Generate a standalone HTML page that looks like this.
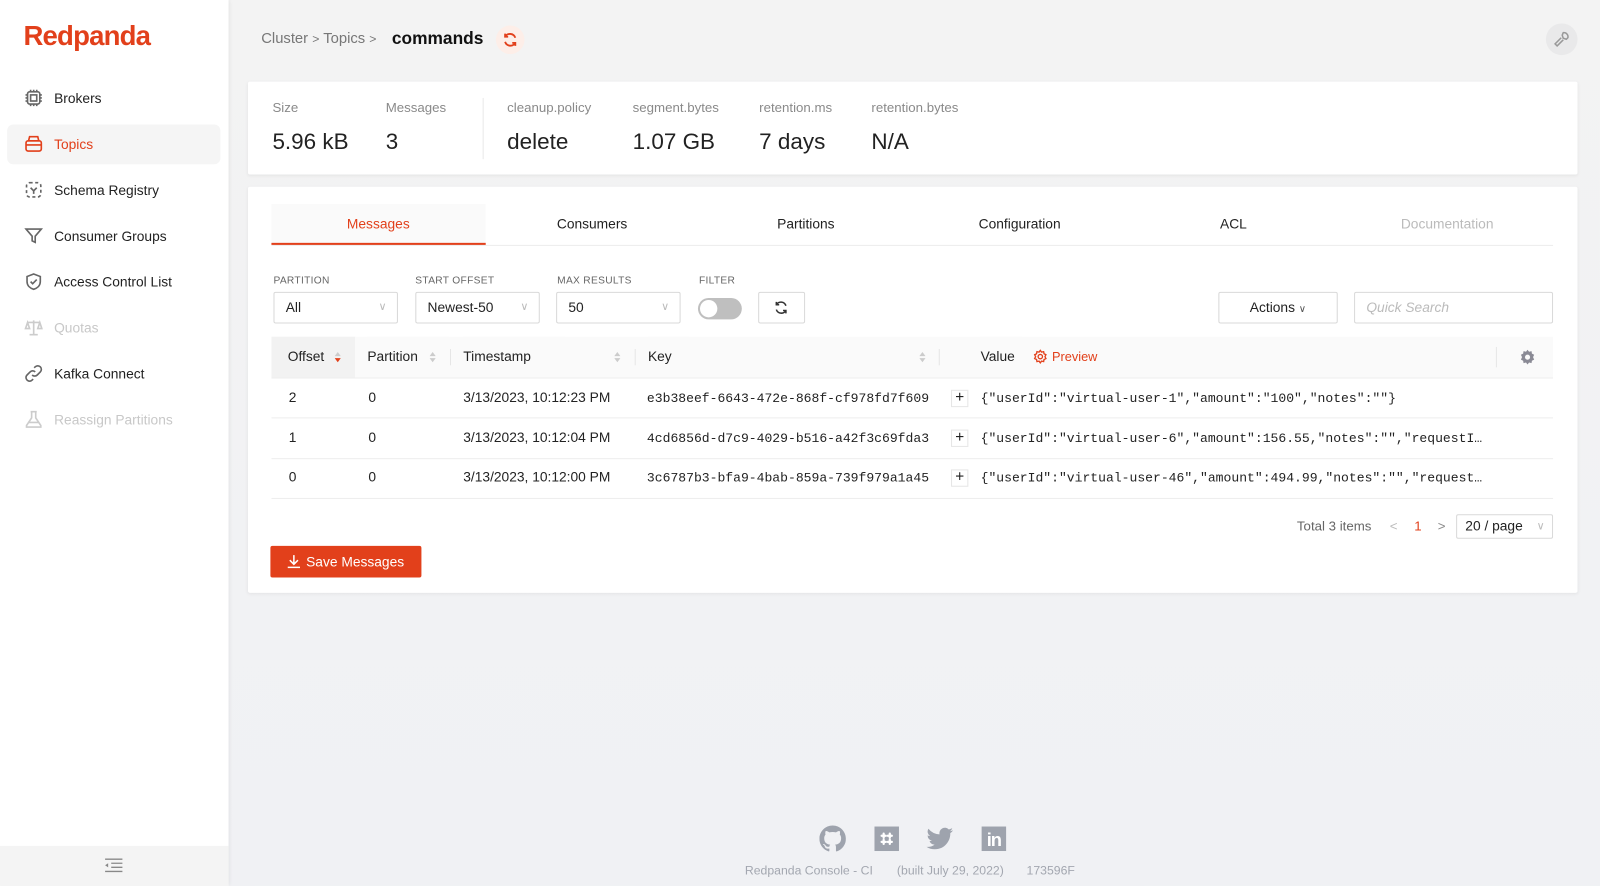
<!DOCTYPE html>
<html><head><meta charset="utf-8"><style>
*{box-sizing:border-box;margin:0;padding:0}
html,body{width:1600px;height:886px;overflow:hidden;background:#f2f2f3;font-family:"Liberation Sans",sans-serif;color:#222}
#w{position:absolute;left:0;top:0;width:1568px;height:868px;transform:scale(1.0204);transform-origin:0 0;background:linear-gradient(#f3f3f3,#f0f1f4)}
.a{position:absolute}
.sb{left:0;top:0;width:224px;height:868px;background:#fff;box-shadow:1px 0 4px rgba(0,0,0,.08)}
.logo{left:23px;top:20px;font-size:27px;font-weight:bold;color:#e2401b;letter-spacing:-0.8px}
.nav{left:24px;font-size:13.5px;color:#222;display:flex;align-items:center;gap:11px}
.nav svg{width:18px;height:18px;fill:none;stroke:#666;stroke-width:1.6}
.card{background:#fff;left:243px;width:1303px;box-shadow:0 1px 3px rgba(0,0,0,.06);border-radius:2px}
.lbl{font-size:13px;color:#8a8a8a}
.val{font-size:22px;color:#222}
.tab{top:200px;height:40px;width:209.5px;text-align:center;line-height:40px;font-size:13.5px;color:#222}
.fl{top:270px;font-size:10px;color:#666;letter-spacing:.3px}
.sel{top:286px;height:31px;border:1px solid #d9d9d9;background:#fff;font-size:13.5px;line-height:29px;padding-left:11px;border-radius:2px}
.sel .c{position:absolute;right:10px;top:0;color:#bbb;font-size:11px}
.th{top:330px;height:40px;line-height:40px;font-size:13.5px;color:#222;background:#fafafa}
.td{font-size:13.5px;color:#222}
.mono{font-family:"Liberation Mono",monospace;font-size:12.8px;letter-spacing:0}
.sort{position:absolute;top:14px;width:6px;height:12px}
.row{left:266px;width:1256px;height:1px;background:#eee}
</style></head><body><div id="w">
<div class="a sb"></div>
<div class="a logo">Redpanda</div>
<div class="a" style="left:7px;top:122px;width:209px;height:39px;background:#f5f5f5;border-radius:6px"></div>
<div class="a nav" style="top:87px"><svg viewBox="0 0 18 18"><rect x="3" y="3" width="12" height="12" rx="2"/><rect x="6" y="6" width="6" height="6"/><path d="M6 1v2M9 1v2M12 1v2M6 15v2M9 15v2M12 15v2M1 6h2M1 9h2M1 12h2M15 6h2M15 9h2M15 12h2"/></svg>Brokers</div>
<div class="a nav" style="top:132px;color:#e2401b"><svg viewBox="0 0 18 18" style="stroke:#e2401b"><path d="M5 2h8l1 4H4z"/><rect x="1.5" y="6" width="15" height="10" rx="2"/><path d="M1.5 10h15"/></svg>Topics</div>
<div class="a nav" style="top:177px"><svg viewBox="0 0 18 18" stroke-dasharray="3 2.5"><rect x="2" y="2" width="14" height="14" rx="3"/><path d="M6 7l3 3 3-3M9 10v3" stroke-dasharray="none"/></svg>Schema Registry</div>
<div class="a nav" style="top:222px"><svg viewBox="0 0 18 18"><path d="M1.5 2.5h15l-6 7v6l-3-1.5V9.5z"/></svg>Consumer Groups</div>
<div class="a nav" style="top:267px"><svg viewBox="0 0 18 18"><path d="M9 1.5l6.5 2.5v5c0 4-3 6.5-6.5 7.5C5.5 15.5 2.5 13 2.5 9V4z"/><path d="M6 9l2 2 4-4"/></svg>Access Control List</div>
<div class="a nav" style="top:312px;color:#c8c8c8"><svg viewBox="0 0 18 18" style="stroke:#ccc"><path d="M9 2v14M5 16h8M3 4h12M3 4l-2 6h4zM15 4l-2 6h4z"/></svg>Quotas</div>
<div class="a nav" style="top:357px"><svg viewBox="0 0 18 18"><path d="M7.5 10.5a3.5 3.5 0 005 0l3-3a3.5 3.5 0 00-5-5l-1 1M10.5 7.5a3.5 3.5 0 00-5 0l-3 3a3.5 3.5 0 005 5l1-1"/></svg>Kafka Connect</div>
<div class="a nav" style="top:402px;color:#c8c8c8"><svg viewBox="0 0 18 18" style="stroke:#ccc"><path d="M6 1.5h6M7 1.5v6l-5 7.5v1.5h14V15l-5-7.5v-6M4 12h10"/></svg>Reassign Partitions</div>
<div class="a" style="left:0;top:829px;width:224px;height:39px;background:#f4f4f4"></div>
<svg class="a" style="left:102px;top:840px" width="18" height="16" viewBox="0 0 18 16" stroke="#888" stroke-width="1.3"><path d="M1 2h17M7 6h11M7 10h11M1 14h17"/><path d="M1 8l3-2v4z" fill="#888" stroke="none"/></svg>

<div class="a" style="left:256px;top:30px;font-size:14.5px;color:#777">Cluster <span style="font-size:12px">&gt;</span> Topics <span style="font-size:12px">&gt;</span></div>
<div class="a" style="left:384px;top:28px;font-size:17px;font-weight:bold;color:#111">commands</div>
<div class="a" style="left:486px;top:25px;width:28px;height:28px;border-radius:50%;background:#fdeee8"></div>
<svg class="a" style="left:492px;top:31px" width="16" height="16" viewBox="0 0 16 16" fill="none" stroke="#e2401b" stroke-width="1.8"><path d="M13 6a5.5 5.5 0 00-10-1M3 10a5.5 5.5 0 0010 1"/><path d="M3 2v3h3M13 14v-3h-3"/></svg>
<div class="a" style="left:1515px;top:23px;width:31px;height:31px;border-radius:50%;background:#e9e9ea"></div>
<svg class="a" style="left:1522px;top:30px" width="17" height="17" viewBox="0 0 17 17" fill="none" stroke="#999" stroke-width="1.5"><path d="M10 2a4 4 0 014.5 5l-1.5 1.5-3-1-1-3zM8 7l-6 6 2 2 6-6"/></svg>

<div class="a card" style="top:80px;height:91px"></div>
<div class="a lbl" style="left:267px;top:98px">Size</div><div class="a val" style="left:267px;top:126px">5.96 kB</div>
<div class="a lbl" style="left:378px;top:98px">Messages</div><div class="a val" style="left:378px;top:126px">3</div>
<div class="a" style="left:473px;top:96px;width:1px;height:60px;background:#e8e8e8"></div>
<div class="a lbl" style="left:497px;top:98px">cleanup.policy</div><div class="a val" style="left:497px;top:126px">delete</div>
<div class="a lbl" style="left:620px;top:98px">segment.bytes</div><div class="a val" style="left:620px;top:126px">1.07 GB</div>
<div class="a lbl" style="left:744px;top:98px">retention.ms</div><div class="a val" style="left:744px;top:126px">7 days</div>
<div class="a lbl" style="left:854px;top:98px">retention.bytes</div><div class="a val" style="left:854px;top:126px">N/A</div>

<div class="a card" style="top:183px;height:398px"></div>
<div class="a" style="left:266px;top:240px;width:1256px;height:1px;background:#ececec"></div>
<div class="a tab" style="left:266px;background:#fafafa;color:#e2401b;border-bottom:2px solid #e2401b">Messages</div>
<div class="a tab" style="left:475.5px">Consumers</div>
<div class="a tab" style="left:685px">Partitions</div>
<div class="a tab" style="left:894.5px">Configuration</div>
<div class="a tab" style="left:1104px">ACL</div>
<div class="a tab" style="left:1313.5px;color:#bbb">Documentation</div>

<div class="a fl" style="left:268px">PARTITION</div>
<div class="a fl" style="left:407px">START OFFSET</div>
<div class="a fl" style="left:546px">MAX RESULTS</div>
<div class="a fl" style="left:685px">FILTER</div>
<div class="a sel" style="left:268px;width:122px">All<span class="c">∨</span></div>
<div class="a sel" style="left:407px;width:122px">Newest-50<span class="c">∨</span></div>
<div class="a sel" style="left:545px;width:122px">50<span class="c">∨</span></div>
<div class="a" style="left:684px;top:292px;width:43px;height:21px;border-radius:11px;background:#bfbfbf"></div>
<div class="a" style="left:686px;top:294px;width:17px;height:17px;border-radius:50%;background:#fff"></div>
<div class="a sel" style="left:743px;width:46px;padding:0"></div>
<svg class="a" style="left:758px;top:294px" width="15" height="15" viewBox="0 0 16 16" fill="none" stroke="#333" stroke-width="1.6"><path d="M13 6a5.5 5.5 0 00-10-1M3 10a5.5 5.5 0 0010 1"/><path d="M3 2v3h3M13 14v-3h-3"/></svg>
<div class="a sel" style="left:1194px;width:117px;padding:0;text-align:center">Actions <span style="font-size:10px;color:#555">∨</span></div>
<div class="a sel" style="left:1327px;width:195px;color:#bbb;font-style:italic">Quick Search</div>

<div class="a th" style="left:266px;width:1256px"></div>
<div class="a th" style="left:266px;width:82px;background:#f2f2f2;padding-left:16px">Offset</div>
<svg class="sort a" style="left:328px;top:344px" viewBox="0 0 6 12"><path d="M0 5l3-4 3 4z" fill="#ccc"/><path d="M0 7l3 4 3-4z" fill="#e2401b"/></svg>
<div class="a th" style="left:360px;width:80px">Partition</div>
<svg class="sort a" style="left:421px;top:344px" viewBox="0 0 6 12"><path d="M0 5l3-4 3 4zM0 7l3 4 3-4z" fill="#ccc"/></svg>
<div class="a" style="left:441px;top:342px;width:1px;height:16px;background:#e6e6e6"></div>
<div class="a th" style="left:454px;width:100px">Timestamp</div>
<svg class="sort a" style="left:602px;top:344px" viewBox="0 0 6 12"><path d="M0 5l3-4 3 4zM0 7l3 4 3-4z" fill="#ccc"/></svg>
<div class="a" style="left:622px;top:342px;width:1px;height:16px;background:#e6e6e6"></div>
<div class="a th" style="left:635px;width:40px">Key</div>
<svg class="sort a" style="left:901px;top:344px" viewBox="0 0 6 12"><path d="M0 5l3-4 3 4zM0 7l3 4 3-4z" fill="#ccc"/></svg>
<div class="a" style="left:920px;top:342px;width:1px;height:16px;background:#e6e6e6"></div>
<div class="a th" style="left:961px;width:40px">Value</div>
<svg class="a" style="left:1012px;top:342px" width="15" height="15" viewBox="0 0 16 16" fill="none" stroke="#e2401b" stroke-width="1.4"><circle cx="8" cy="8" r="2.3"/><path d="M8 1.5l1.3 1.8 2.2-.5.4 2.2 2 1-1 2 1 2-2 1-.4 2.2-2.2-.5L8 14.5l-1.3-1.8-2.2.5-.4-2.2-2-1 1-2-1-2 2-1 .4-2.2 2.2.5z"/></svg>
<div class="a" style="left:1031px;top:343px;font-size:12.5px;color:#e2401b">Preview</div>
<div class="a" style="left:1466px;top:340px;width:1px;height:20px;background:#e6e6e6"></div>
<svg class="a" style="left:1489px;top:342px" width="16" height="16" viewBox="0 0 16 16"><path d="M8 .8l1.5 1.9 2.4-.6.4 2.4 2.2 1.1-1.1 2.4 1.1 2.4-2.2 1.1-.4 2.4-2.4-.6L8 15.2l-1.5-1.9-2.4.6-.4-2.4-2.2-1.1L2.6 8 1.5 5.6l2.2-1.1.4-2.4 2.4.6z" fill="#8a8a95"/><circle cx="8" cy="8" r="2.5" fill="#fafafa"/></svg>
<div class="a row" style="top:370px"></div>
<div class="a row" style="top:409px"></div>
<div class="a row" style="top:449px"></div>
<div class="a row" style="top:488px"></div>

<div class="a td" style="left:283px;top:382px">2</div><div class="a td" style="left:361px;top:382px">0</div><div class="a td" style="left:454px;top:382px">3/13/2023, 10:12:23 PM</div><div class="a td mono" style="left:634px;top:383px">e3b38eef-6643-472e-868f-cf978fd7f609</div>
<div class="a td" style="left:283px;top:421px">1</div><div class="a td" style="left:361px;top:421px">0</div><div class="a td" style="left:454px;top:421px">3/13/2023, 10:12:04 PM</div><div class="a td mono" style="left:634px;top:422px">4cd6856d-d7c9-4029-b516-a42f3c69fda3</div>
<div class="a td" style="left:283px;top:460px">0</div><div class="a td" style="left:361px;top:460px">0</div><div class="a td" style="left:454px;top:460px">3/13/2023, 10:12:00 PM</div><div class="a td mono" style="left:634px;top:461px">3c6787b3-bfa9-4bab-859a-739f979a1a45</div>
<div class="a" style="left:932px;top:382px;width:17px;height:17px;border:1px solid #e6e6e6;text-align:center;line-height:14px;font-size:15px">+</div>
<div class="a" style="left:932px;top:421px;width:17px;height:17px;border:1px solid #e6e6e6;text-align:center;line-height:14px;font-size:15px">+</div>
<div class="a" style="left:932px;top:460px;width:17px;height:17px;border:1px solid #e6e6e6;text-align:center;line-height:14px;font-size:15px">+</div>
<div class="a td mono" style="left:961px;top:383px">{"userId":"virtual-user-1","amount":"100","notes":""}</div>
<div class="a td mono" style="left:961px;top:422px">{"userId":"virtual-user-6","amount":156.55,"notes":"","requestI…</div>
<div class="a td mono" style="left:961px;top:461px">{"userId":"virtual-user-46","amount":494.99,"notes":"","request…</div>

<div class="a" style="left:1271px;top:508px;font-size:13px;color:#666">Total 3 items</div>
<div class="a" style="left:1362px;top:508px;font-size:13px;color:#bbb">&lt;</div>
<div class="a" style="left:1386px;top:508px;font-size:13px;color:#e2401b">1</div>
<div class="a" style="left:1409px;top:508px;font-size:13px;color:#888">&gt;</div>
<div class="a sel" style="left:1427px;top:504px;width:95px;height:24px;line-height:22px;padding-left:8px">20 / page<span class="c" style="right:7px">∨</span></div>

<div class="a" style="left:265px;top:535px;width:148px;height:31px;background:#e2401b;border-radius:2px;color:#fff;font-size:13.5px;line-height:31px;padding-left:35px">Save Messages</div>
<svg class="a" style="left:281px;top:543px" width="14" height="14" viewBox="0 0 14 14" fill="none" stroke="#fff" stroke-width="1.5"><path d="M7 1v9M3 6l4 4 4-4M1 13h12"/></svg>

<svg class="a" style="left:803px;top:809px" width="26" height="26" viewBox="0 0 16 16"><path fill="#9ea3ad" d="M8 0C3.58 0 0 3.58 0 8c0 3.54 2.29 6.530 5.47 7.590.4.07.55-.17.55-.38v-1.34c-2.23.48-2.7-1.07-2.7-1.07-.36-.93-.89-1.17-.89-1.17-.73-.5.06-.49.06-.49.8.06 1.23.83 1.230.83.72 1.22 1.87.87 2.33.66.07-.52.28-.87.5-1.07-1.78-.2-3.64-.89-3.64-3.950 0-.87.31-1.59.82-2.15-.08-.2-.36-1.020.08-2.12 0 0 .67-.21 2.2.82.64-.18 1.32-.27 2-.27.68 0 1.36.09 2 .27 1.53-1.04 2.2-.82 2.2-.82.44 1.1.16 1.92.08 2.12.51.56.82 1.27.82 2.15 0 3.07-1.87 3.75-3.65 3.95.29.25.54.73.54 1.48v2.2c0 .21.15.46.55.38A8.013 8.013 0 0016 8c0-4.42-3.58-8-8-8z"/></svg>
<div class="a" style="left:857px;top:810px;width:24px;height:24px;background:#9ea3ad"></div>
<svg class="a" style="left:857px;top:810px" width="24" height="24" viewBox="0 0 24 24" stroke="#fff" stroke-width="2.2" stroke-linecap="round"><path d="M9 7v4M15 13v4M7 15h4M13 9h4M9 13v4M15 7v4M7 9h4M13 15h4"/></svg>
<svg class="a" style="left:908px;top:811px" width="26" height="22" viewBox="0 0 24 20"><path fill="#9ea3ad" d="M24 2.4a9.8 9.8 0 01-2.8.8A4.9 4.9 0 0023.3.4a9.9 9.9 0 01-3.1 1.2A4.9 4.9 0 0011.8 6 14 14 0 011.7.9a4.9 4.9 0 001.5 6.6A4.9 4.9 0 011 6.9a4.9 4.9 0 003.9 4.9 4.9 4.9 0 01-2.2.1 4.9 4.9 0 004.6 3.4A9.9 9.9 0 010 17.3 14 14 0 007.5 19.5c9.1 0 14-7.5 14-14v-.6A10 10 0 0024 2.4z"/></svg>
<div class="a" style="left:962px;top:810px;width:24px;height:24px;background:#9ea3ad;color:#fff;font-weight:bold;font-size:18px;line-height:26px;text-align:center;letter-spacing:-1px">in</div>
<div class="a" style="left:730px;top:846px;font-size:12px;color:#a3a7b0">Redpanda Console - CI</div>
<div class="a" style="left:879px;top:846px;font-size:12px;color:#a3a7b0">(built July 29, 2022)</div>
<div class="a" style="left:1006px;top:846px;font-size:12px;color:#a3a7b0">173596F</div>
</div></body></html>
